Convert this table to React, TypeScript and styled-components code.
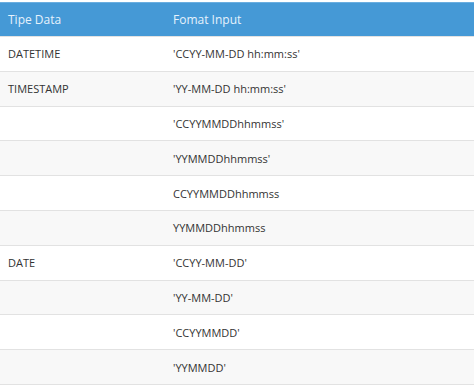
import React from 'react';
import styled, { createGlobalStyle } from 'styled-components';

const GlobalStyle = createGlobalStyle`
  html, body {
    margin: 0;
    padding: 0;
    background: #fff;
  }
  body {
    font-family: 'Open Sans', 'Noto Sans', sans-serif;
  }
`;

const Wrapper = styled.div`
  padding-top: 2px;
  width: 474px;
`;

const Table = styled.table`
  width: 100%;
  border-collapse: collapse;
  font-size: 11px;
  color: #333;
`;

const HeadCell = styled.th<{ $w?: number }>`
  background: #4599d6;
  color: #e6f2fc;
  font-weight: 400;
  font-size: 12px;
  text-align: left;
  height: 34px;
  padding: 0 8px;
  width: ${p => (p.$w ? `${p.$w}px` : 'auto')};
  border-top: 1px solid #6aaee0;
  box-sizing: border-box;
`;

const Row = styled.tr<{ $striped: boolean }>`
  background: ${p => (p.$striped ? '#f8f8f8' : '#fff')};
  border-top: 1px solid #e2e2e2;
`;

const Cell = styled.td<{ $w?: number }>`
  height: 33.8px;
  padding: 0 8px;
  width: ${p => (p.$w ? `${p.$w}px` : 'auto')};
  vertical-align: middle;
`;

const EndCell = styled.td`
  height: 3px;
  padding: 0;
`;

const rows: [string, string][] = [
  ['DATETIME', "'CCYY-MM-DD hh:mm:ss'"],
  ['TIMESTAMP', "'YY-MM-DD hh:mm:ss'"],
  ['', "'CCYYMMDDhhmmss'"],
  ['', "'YYMMDDhhmmss'"],
  ['', 'CCYYMMDDhhmmss'],
  ['', 'YYMMDDhhmmss'],
  ['DATE', "'CCYY-MM-DD'"],
  ['', "'YY-MM-DD'"],
  ['', "'CCYYMMDD'"],
  ['', "'YYMMDD'"],
];

const App: React.FC = () => (
  <Wrapper>
    <GlobalStyle />
    <Table>
      <thead>
        <tr>
          <HeadCell $w={149}>Tipe Data</HeadCell>
          <HeadCell>Fomat Input</HeadCell>
        </tr>
      </thead>
      <tbody>
        {rows.map(([type, fmt], i) => (
          <Row key={i} $striped={i % 2 === 1}>
            <Cell $w={149}>{type}</Cell>
            <Cell>{fmt}</Cell>
          </Row>
        ))}
        <Row $striped={false}>
          <EndCell colSpan={2} />
        </Row>
      </tbody>
    </Table>
  </Wrapper>
);

export default App;
